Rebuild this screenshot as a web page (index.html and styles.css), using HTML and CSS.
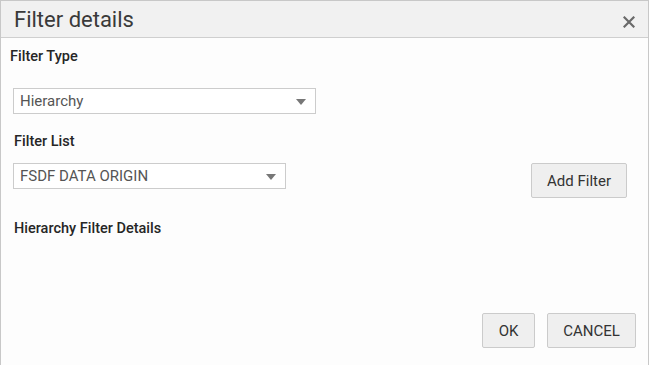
FILE: index.html
```html
<!DOCTYPE html>
<html>
<head>
<meta charset="utf-8">
<link rel="stylesheet" href="styles.css">
</head>
<body>
<div class="dialog">
  <div class="header">
    <span class="title">Filter details</span>
    <svg class="close" width="12" height="12" viewBox="0 0 12 12"><path d="M1.5 1.5 L10.5 10.5 M10.5 1.5 L1.5 10.5" stroke="#6a6a6a" stroke-width="2.2" stroke-linecap="square"/></svg>
  </div>
  <div class="content">
    <div class="label label-type">Filter Type</div>
    <div class="select select-type"><span>Hierarchy</span><span class="caret"></span></div>
    <div class="label label-list">Filter List</div>
    <div class="list-row">
      <div class="select select-list"><span>FSDF DATA ORIGIN</span><span class="caret"></span></div>
      <button class="btn btn-add">Add Filter</button>
    </div>
    <div class="label label-hier">Hierarchy Filter Details</div>
    <div class="footer">
      <button class="btn btn-ok">OK</button>
      <button class="btn btn-cancel">CANCEL</button>
    </div>
  </div>
</div>
</body>
</html>
```

FILE: styles.css
```css
html, body {
  margin: 0;
  padding: 0;
  background: #ffffff;
}
body {
  font-family: Roboto, "Liberation Sans", sans-serif;
  color: #333;
}
.dialog {
  width: 649px;
  height: 365px;
  box-sizing: border-box;
  border: 1px solid #c8c8c8;
  border-bottom: none;
  display: flex;
  flex-direction: column;
  background: #fdfdfd;
}
.header {
  height: 37px;
  flex: none;
  box-sizing: border-box;
  background: #f1f1f1;
  border-bottom: 1px solid #cfcfcf;
  display: flex;
  align-items: center;
  justify-content: space-between;
  padding: 0 13px 0 13px;
}
.title {
  font-size: 22px;
  color: #3a3a3a;
  line-height: 1;
  margin-top: 1px;
}
.close {
  margin-top: 6px;
}
.content {
  flex: 1;
  display: flex;
  flex-direction: column;
  padding: 0 12px 17px 12px;
}
.label {
  font-size: 14.5px;
  font-weight: 500;
  color: #262626;
  line-height: 16px;
}
.label-type {
  margin-top: 11px;
  margin-left: -3px;
}
.select {
  box-sizing: border-box;
  height: 26px;
  border: 1px solid #cccccc;
  background: #fff;
  display: flex;
  align-items: center;
  justify-content: space-between;
  padding: 0 9px 0 6px;
  font-size: 15px;
  color: #555;
}
.caret {
  width: 0;
  height: 0;
  border-left: 5px solid transparent;
  border-right: 5px solid transparent;
  border-top: 6px solid #777;
  margin-top: 1px;
}
.select-type {
  width: 303px;
  margin-top: 23px;
}
.label-list {
  margin-top: 20px;
  margin-left: 1px;
}
.list-row {
  display: flex;
  justify-content: space-between;
  align-items: flex-start;
  margin-top: 13px;
}
.select-list {
  width: 273px;
}
.btn {
  box-sizing: border-box;
  height: 35px;
  border: 1px solid #cbcbcb;
  border-radius: 2px;
  background: #efefef;
  font-family: Roboto, "Liberation Sans", sans-serif;
  font-size: 15px;
  color: #333;
  padding: 0;
}
.btn-add {
  width: 96px;
  margin-right: 9px;
}
.label-hier {
  margin-top: 23px;
  margin-left: 1px;
}
.footer {
  margin-top: auto;
  display: flex;
  justify-content: flex-end;
  gap: 12px;
}
.btn-ok {
  width: 53px;
}
.btn-cancel {
  width: 89px;
}
```
